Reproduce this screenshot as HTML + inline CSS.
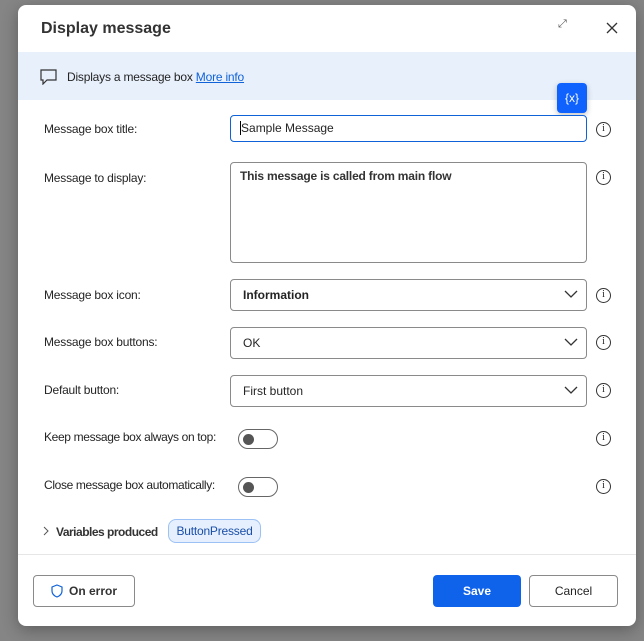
<!DOCTYPE html>
<html><head><style>
*{box-sizing:border-box;margin:0;padding:0}
body{width:644px;height:641px;background:#858585;font-family:"Liberation Sans",sans-serif;position:relative;overflow:hidden;color:#242424}
.dlg{position:absolute;left:18px;top:5px;width:618px;height:621px;background:#fff;border-radius:8px;box-shadow:0 4px 16px rgba(0,0,0,.3)}
.a{position:absolute}
.lbl{position:absolute;left:44px;font-size:12px;color:#242424;letter-spacing:-0.2px}
.inp{position:absolute;left:230px;width:357px;border:1px solid #8a8a8a;border-radius:4px;background:#fff;font-size:12px;padding-left:12px}
.dd{height:32px;line-height:30px}
.chev{position:absolute;right:8px;top:10px}
.info{position:absolute;left:596px;width:15px;height:15px;border:1.3px solid #333;border-radius:50%;font-size:10px;text-align:center;line-height:12px;font-family:"Liberation Serif",serif}
.tog{position:absolute;left:238px;width:40px;height:20px;border:1px solid #666;border-radius:10px}
.tog:after{content:"";position:absolute;left:4px;top:4px;width:11px;height:11px;border-radius:50%;background:#555}
.btn{position:absolute;top:575px;height:32px;border-radius:4px;font-size:12px;text-align:center;line-height:30px;font-weight:bold}
</style></head><body>
<div class="dlg"></div>
<div class="a" style="left:41px;top:20px;font-size:16px;font-weight:bold;color:#333">Display message</div>
<div class="a" style="left:558px;top:18px;font-size:11px;color:#555">⤢</div>
<svg class="a" style="left:606px;top:22px" width="12" height="12"><path d="M1 1L11 11M11 1L1 11" stroke="#333" stroke-width="1.3"/></svg>
<div class="a" style="left:18px;top:52px;width:618px;height:48px;background:#e8f0fc"></div>
<svg class="a" style="left:40px;top:69px" width="18" height="16"><path d="M1 1H16V11H7L3 15V11H1Z" fill="none" stroke="#333" stroke-width="1.2"/></svg>
<div class="a" style="left:67px;top:70px;font-size:12px;letter-spacing:-0.2px">Displays a message box <span style="color:#0f62d8;text-decoration:underline">More info</span></div>
<div class="a" style="left:557px;top:83px;width:30px;height:30px;background:#0f62fe;border-radius:4px;color:#fff;font-size:12px;text-align:center;line-height:30px;box-shadow:0 2px 6px rgba(0,0,0,.25)">{x}</div>
<div class="lbl" style="top:122px">Message box title:</div>
<div class="inp" style="top:115px;height:27px;line-height:25px;border-color:#0f62d8;padding-left:9px"><span style="border-left:1px solid #000">S</span>ample Message</div>
<div class="info" style="top:122px">i</div>
<div class="lbl" style="top:171px">Message to display:</div>
<div class="inp" style="top:162px;height:101px;padding-top:6px;padding-left:9px;font-weight:bold;letter-spacing:-0.2px;color:#333">This message is called from main flow</div>
<div class="info" style="top:170px">i</div>
<div class="lbl" style="top:288px">Message box icon:</div>
<div class="inp dd" style="top:279px;font-weight:bold">Information<svg class="chev" width="14" height="9"><path d="M1 1L7 7L13 1" fill="none" stroke="#333" stroke-width="1.3"/></svg></div>
<div class="info" style="top:288px">i</div>
<div class="lbl" style="top:335px">Message box buttons:</div>
<div class="inp dd" style="top:327px">OK<svg class="chev" width="14" height="9"><path d="M1 1L7 7L13 1" fill="none" stroke="#333" stroke-width="1.3"/></svg></div>
<div class="info" style="top:335px">i</div>
<div class="lbl" style="top:383px">Default button:</div>
<div class="inp dd" style="top:375px">First button<svg class="chev" width="14" height="9"><path d="M1 1L7 7L13 1" fill="none" stroke="#333" stroke-width="1.3"/></svg></div>
<div class="info" style="top:383px">i</div>
<div class="lbl" style="top:430px;letter-spacing:-0.35px">Keep message box always on top:</div>
<div class="tog" style="top:429px"></div>
<div class="info" style="top:431px">i</div>
<div class="lbl" style="top:478px;letter-spacing:-0.35px">Close message box automatically:</div>
<div class="tog" style="top:477px"></div>
<div class="info" style="top:479px">i</div>
<svg class="a" style="left:43px;top:526px" width="6" height="10"><path d="M1 1L5 5L1 9" fill="none" stroke="#555" stroke-width="1"/></svg>
<div class="a" style="left:56px;top:525px;font-size:12px;font-weight:bold;letter-spacing:-0.5px;color:#333">Variables produced</div>
<div class="a" style="left:168px;top:519px;width:93px;height:24px;border:1px solid #9cc2f5;background:#e6effd;border-radius:8px;color:#1a4fa8;font-size:12px;text-align:center;line-height:22px;letter-spacing:-0.2px">ButtonPressed</div>
<div class="a" style="left:18px;top:554px;width:618px;height:1px;background:#e6e6e6"></div>
<div class="btn" style="left:33px;width:102px;border:1px solid #8a8a8a;background:#fff;color:#333"><svg style="vertical-align:-3px;margin-right:6px" width="12" height="14"><path d="M6 1L11 3V7C11 10 8.5 12 6 13C3.5 12 1 10 1 7V3Z" fill="none" stroke="#0f62d8" stroke-width="1.2"/></svg>On error</div>
<div class="btn" style="left:433px;width:88px;background:#0f62ea;color:#fff;line-height:32px">Save</div>
<div class="btn" style="left:529px;width:89px;border:1px solid #8a8a8a;background:#fff;font-weight:normal">Cancel</div>
</body></html>
